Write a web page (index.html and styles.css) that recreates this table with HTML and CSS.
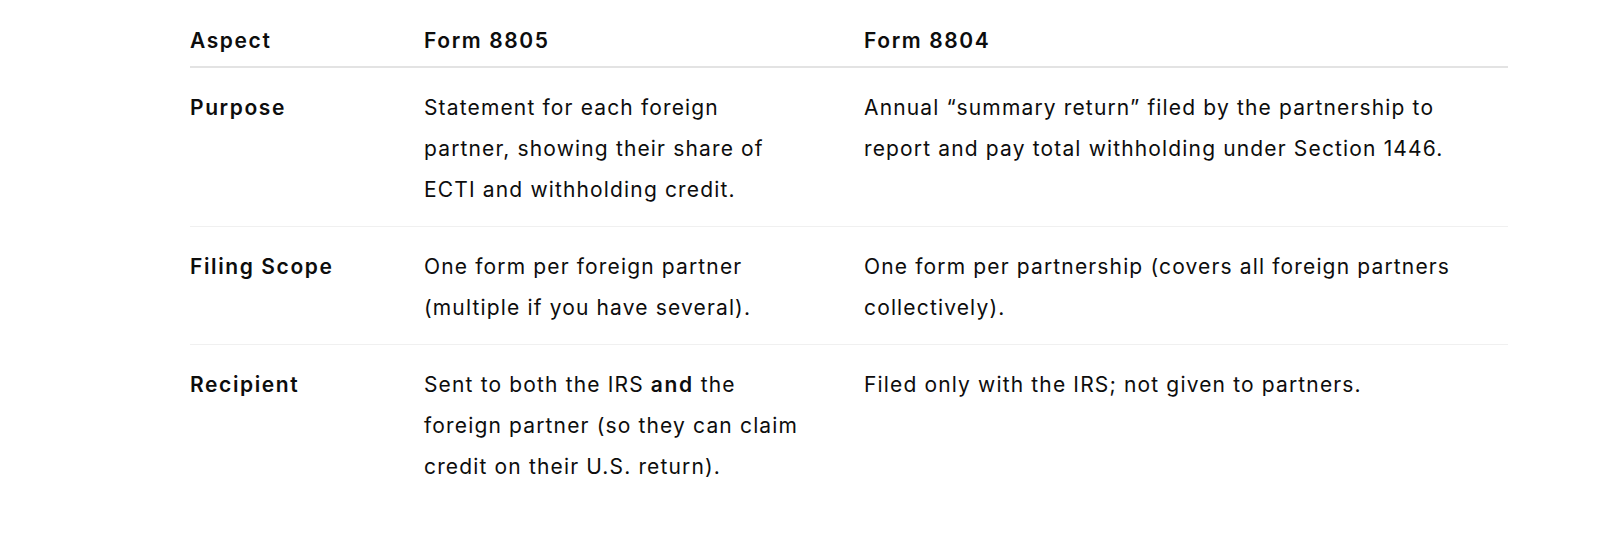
FILE: index.html
```html
<!DOCTYPE html>
<html lang="en">
<head>
<meta charset="utf-8">
<title>Form 8805 vs Form 8804</title>
<link rel="stylesheet" href="styles.css">
</head>
<body>
<main class="page">
  <table class="compare">
    <colgroup>
      <col class="c-aspect">
      <col class="c-8805">
      <col class="c-8804">
    </colgroup>
    <thead>
      <tr>
        <th>Aspect</th>
        <th>Form 8805</th>
        <th>Form 8804</th>
      </tr>
    </thead>
    <tbody>
      <tr>
        <td class="label">Purpose</td>
        <td>Statement for each foreign<br>partner, showing their share of<br>ECTI and withholding credit.</td>
        <td>Annual “summary return” filed by the partnership to<br>report and pay total withholding under Section 1446.</td>
      </tr>
      <tr>
        <td class="label">Filing Scope</td>
        <td>One form per foreign partner<br>(multiple if you have several).</td>
        <td>One form per partnership (covers all foreign partners<br>collectively).</td>
      </tr>
      <tr>
        <td class="label">Recipient</td>
        <td>Sent to both the IRS <strong>and</strong> the<br>foreign partner (so they can claim<br>credit on their U.S. return).</td>
        <td>Filed only with the IRS; not given to partners.</td>
      </tr>
    </tbody>
  </table>
</main>
</body>
</html>
```

FILE: styles.css
```css
html, body {
  margin: 0;
  padding: 0;
  background: #ffffff;
}

body {
  font-family: Inter, "Noto Sans", "Liberation Sans", sans-serif;
  font-size: 21px;
  letter-spacing: 1.15px;
  color: #0d0d0d;
  -webkit-font-smoothing: antialiased;
}

.page {
  padding-left: 190px;
}

.compare {
  width: 1318px;
  border-collapse: collapse;
  table-layout: fixed;
}

.c-aspect { width: 234px; }
.c-8805 { width: 440px; }
.c-8804 { width: 644px; }

.compare th,
.compare td {
  text-align: left;
  vertical-align: top;
  line-height: 41px;
  padding: 0;
  white-space: nowrap;
}

.compare th {
  font-weight: 600;
  letter-spacing: 1.6px;
  padding-top: 20px;
  padding-bottom: 5px;
  border-bottom: 2px solid #e3e3e3;
}

.compare td {
  font-weight: 400;
  padding-top: 19px;
  padding-bottom: 16px;
}

.compare tbody tr + tr td {
  border-top: 1px solid #f0f0f0;
}

.compare td.label {
  font-weight: 600;
  letter-spacing: 1.6px;
}

.compare strong {
  font-weight: 600;
  letter-spacing: 1.6px;
}
```
